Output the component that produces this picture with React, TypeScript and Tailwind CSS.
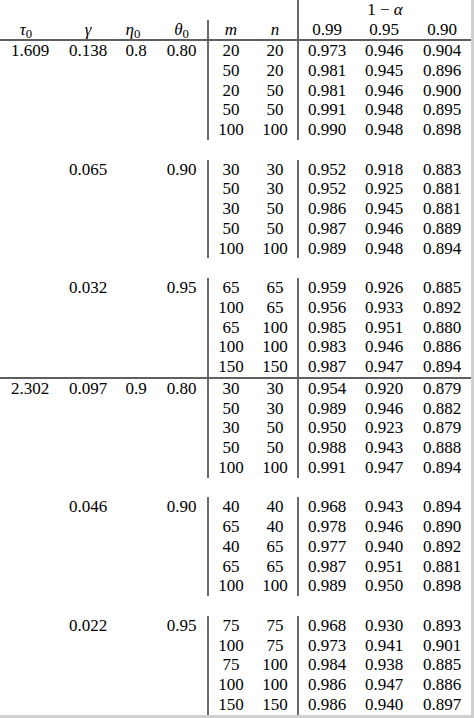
import React from "react";

type G = {
  tau?: string;
  gamma: string;
  eta?: string;
  theta: string;
  rows: string[][];
};

const top: G[] = [
  {
    tau: "1.609",
    gamma: "0.138",
    eta: "0.8",
    theta: "0.80",
    rows: [
      ["20", "20", "0.973", "0.946", "0.904"],
      ["50", "20", "0.981", "0.945", "0.896"],
      ["20", "50", "0.981", "0.946", "0.900"],
      ["50", "50", "0.991", "0.948", "0.895"],
      ["100", "100", "0.990", "0.948", "0.898"],
    ],
  },
  {
    gamma: "0.065",
    theta: "0.90",
    rows: [
      ["30", "30", "0.952", "0.918", "0.883"],
      ["50", "30", "0.952", "0.925", "0.881"],
      ["30", "50", "0.986", "0.945", "0.881"],
      ["50", "50", "0.987", "0.946", "0.889"],
      ["100", "100", "0.989", "0.948", "0.894"],
    ],
  },
  {
    gamma: "0.032",
    theta: "0.95",
    rows: [
      ["65", "65", "0.959", "0.926", "0.885"],
      ["100", "65", "0.956", "0.933", "0.892"],
      ["65", "100", "0.985", "0.951", "0.880"],
      ["100", "100", "0.983", "0.946", "0.886"],
      ["150", "150", "0.987", "0.947", "0.894"],
    ],
  },
];

const bottom: G[] = [
  {
    tau: "2.302",
    gamma: "0.097",
    eta: "0.9",
    theta: "0.80",
    rows: [
      ["30", "30", "0.954", "0.920", "0.879"],
      ["50", "30", "0.989", "0.946", "0.882"],
      ["30", "50", "0.950", "0.923", "0.879"],
      ["50", "50", "0.988", "0.943", "0.888"],
      ["100", "100", "0.991", "0.947", "0.894"],
    ],
  },
  {
    gamma: "0.046",
    theta: "0.90",
    rows: [
      ["40", "40", "0.968", "0.943", "0.894"],
      ["65", "40", "0.978", "0.946", "0.890"],
      ["40", "65", "0.977", "0.940", "0.892"],
      ["65", "65", "0.987", "0.951", "0.881"],
      ["100", "100", "0.989", "0.950", "0.898"],
    ],
  },
  {
    gamma: "0.022",
    theta: "0.95",
    rows: [
      ["75", "75", "0.968", "0.930", "0.893"],
      ["100", "75", "0.973", "0.941", "0.901"],
      ["75", "100", "0.984", "0.938", "0.885"],
      ["100", "100", "0.986", "0.947", "0.886"],
      ["150", "150", "0.986", "0.940", "0.897"],
    ],
  },
];

const gridCls =
  "grid grid-cols-[60px_56px_40px_51px_46px_44px_58px_58px_58px] h-[19.76px]";
const cell = "flex items-center justify-center leading-[19.76px]";
const lined = "flex items-center justify-center leading-[19.76px] border-l-2 border-[#6b6b6b]";

function Row({ c }: { c: React.ReactNode[] }) {
  return (
    <div className={gridCls}>
      <div className={cell}>{c[0]}</div>
      <div className={cell}>{c[1]}</div>
      <div className={cell}>{c[2]}</div>
      <div className={cell}>{c[3]}</div>
      <div className={lined}>{c[4]}</div>
      <div className={cell}>{c[5]}</div>
      <div className={lined}>{c[6]}</div>
      <div className={cell}>{c[7]}</div>
      <div className={cell}>{c[8]}</div>
    </div>
  );
}

function Spacer() {
  return <div className="h-[19.76px]" />;
}

function Rule() {
  return <div className="h-[2px] bg-[#5f5f5f]" />;
}

function Block({ groups }: { groups: G[] }) {
  return (
    <>
      {groups.map((g, gi) => (
        <React.Fragment key={gi}>
          {g.rows.map((r, ri) => (
            <Row
              key={ri}
              c={[
                ri === 0 ? g.tau ?? "" : "",
                ri === 0 ? g.gamma : "",
                ri === 0 ? g.eta ?? "" : "",
                ri === 0 ? g.theta : "",
                ...r,
              ]}
            />
          ))}
          {gi < groups.length - 1 && <Spacer />}
        </React.Fragment>
      ))}
    </>
  );
}

function Sym({ s }: { s: string }) {
  return (
    <span>
      <span className="italic">{s}</span>
      <sub className="not-italic">0</sub>
    </span>
  );
}

export default function App() {
  return (
    <div className="w-[474px] h-[718px] overflow-hidden bg-white text-black font-['Liberation_Serif',serif] text-[17px] flex flex-col">
      <div className="flex flex-1">
        <div className="w-[471px] flex flex-col">
          <div className="grid grid-cols-[60px_56px_40px_51px_46px_44px_174px] h-[19.5px]">
            <div />
            <div />
            <div />
            <div />
            <div />
            <div />
            <div className="flex items-center justify-center border-l-2 border-[#6b6b6b] leading-[19.5px]">
              <span>
                1 − <span className="italic">α</span>
              </span>
            </div>
          </div>
          <div className="grid grid-cols-[60px_56px_40px_51px_46px_44px_58px_58px_58px] h-[19.5px]">
            <div className="flex items-center justify-center leading-[19.5px] pr-[8px]">
              <Sym s="τ" />
            </div>
            <div className="flex items-center justify-center leading-[19.5px]">
              <span className="italic">γ</span>
            </div>
            <div className="flex items-center justify-center leading-[19.5px] pr-[6px]">
              <Sym s="η" />
            </div>
            <div className="flex items-center justify-center leading-[19.5px]">
              <Sym s="θ" />
            </div>
            <div className="flex items-center justify-center leading-[19.5px] border-l-2 border-[#6b6b6b]">
              <span className="italic">m</span>
            </div>
            <div className="flex items-center justify-center leading-[19.5px]">
              <span className="italic">n</span>
            </div>
            <div className="flex items-center justify-center leading-[19.5px] border-l-2 border-[#6b6b6b]">
              0.99
            </div>
            <div className="flex items-center justify-center leading-[19.5px]">0.95</div>
            <div className="flex items-center justify-center leading-[19.5px]">0.90</div>
          </div>
          <Rule />
          <Block groups={top} />
          <Rule />
          <Block groups={bottom} />
        </div>
        <div className="w-[3px] bg-[#cfcfcf]" />
      </div>
      <div className="h-[3px] bg-[#cfcfcf]" />
    </div>
  );
}
